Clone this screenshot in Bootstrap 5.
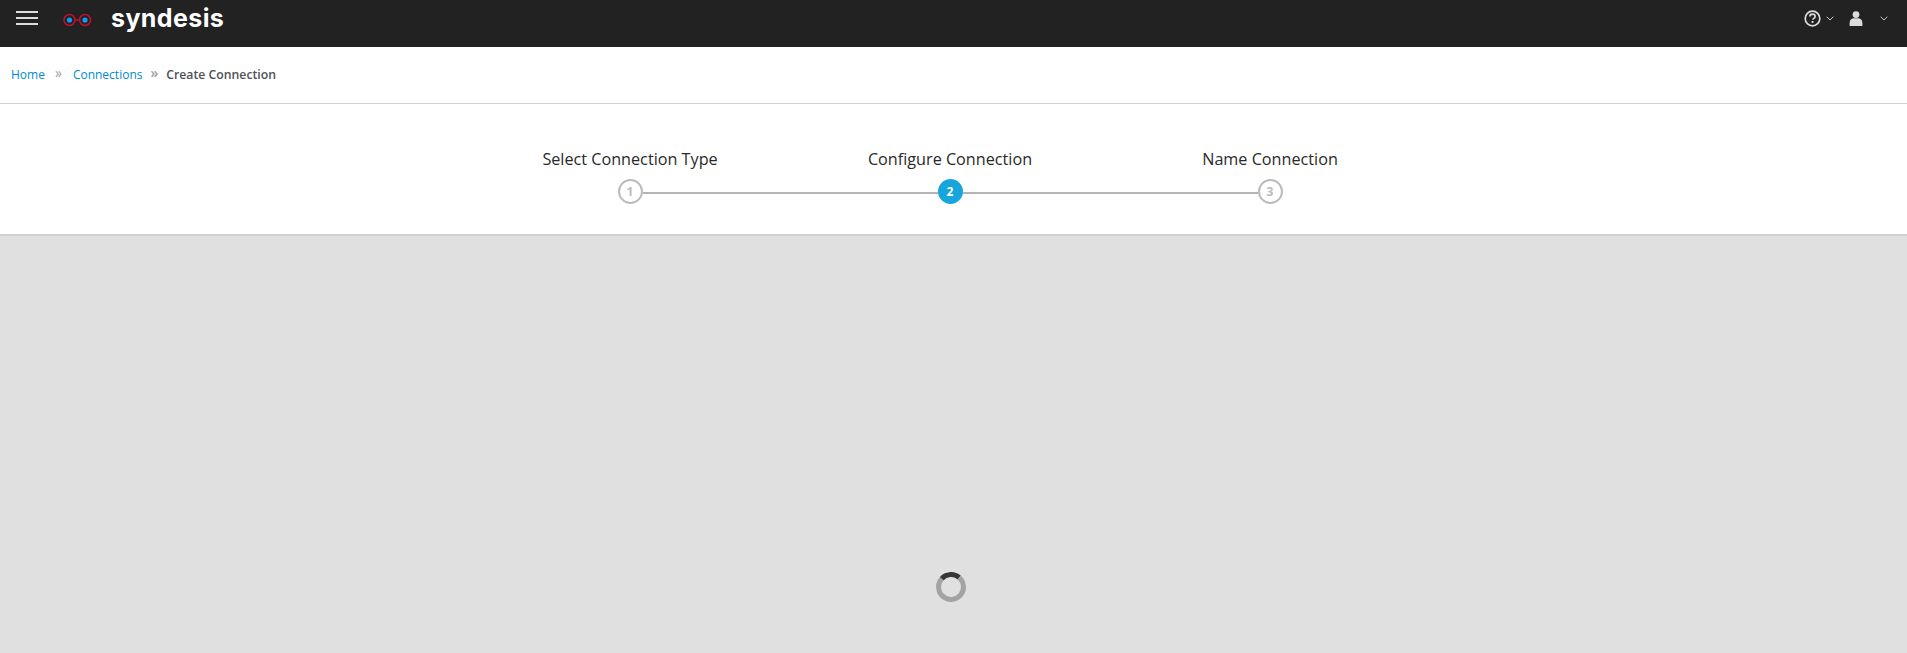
<!DOCTYPE html>
<html lang="en">
<head>
<meta charset="utf-8">
<title>Syndesis - Create Connection</title>
<link rel="stylesheet" href="https://cdn.jsdelivr.net/npm/bootstrap@5.3.0/dist/css/bootstrap.min.css">
<style>
html, body { height: 100%; overflow: hidden; }
body { font-family: "Open Sans", "Noto Sans", sans-serif; background: #e0e0e0; color: #363636; font-size: 12px; }
.sy-top { height: 47px; background: #222222; padding: 0 19px 0 16px; }
.sy-burger { width: 22px; height: 14px; margin-top: -11px; flex-direction: column; justify-content: space-between; }
.sy-burger span { display: block; height: 2px; background: #dcdcdc; }
.sy-glasses { margin-left: 24px; margin-top: -7px; }
.sy-word { font-family: "Inter", sans-serif; font-weight: 700; font-size: 25px; line-height: 1; color: #fff; margin-left: 17px; margin-top: -10px; letter-spacing: .4px; }
.sy-tools { margin-top: -11px; }
.sy-crumbs { height: 57px; background: #fff; border-bottom: 1px solid #d1d1d1; padding: 0 11px; }
.sy-crumbs .breadcrumb { font-size: 12px; margin: 0; }
.sy-crumbs a { color: #0088ce; text-decoration: none; }
.sy-crumbs .breadcrumb-item + .breadcrumb-item { padding-left: 10px; }
.sy-crumbs .breadcrumb-item + .breadcrumb-item::before { content: "\00BB"; color: #9c9c9c; padding-right: 11px; font-size: 14px; line-height: 1; vertical-align: -1px; }
.sy-crumbs .breadcrumb-item.active { color: #4d5258; font-weight: 600; font-size: 12.25px; padding-left: 8px; }
.sy-crumbs .breadcrumb-item.active::before { padding-right: 8px; }
.sy-wizard { height: 132px; background: #fff; border-bottom: 2px solid #d1d1d1; padding: 44px 7px 0 0; }
.sy-labels { width: 960px; }
.sy-label { width: 320px; text-align: center; font-size: 16.2px; line-height: 22px; color: #292929; }
.sy-track { width: 665px; margin-top: 9px; }
.sy-dot { width: 25px; height: 25px; border-radius: 50%; border: 2px solid #bbb; color: #bbb; font-size: 12px; font-weight: 700; flex: none; }
.sy-dot.sy-on { background: #17a6db; border-color: #17a6db; color: #fff; }
.sy-line { height: 2px; background: #b4b4b4; margin-top: 3px; }
.sy-main { padding: 336px 5px 0 0; }
.sy-spin { width: 30px; height: 30px; border-radius: 50%; border: 5px solid #a3a3a3; border-top-color: #363636; transform: rotate(-4deg); }
</style>
</head>
<body>
<header class="sy-top d-flex align-items-center">
  <div class="sy-burger d-flex"><span></span><span></span><span></span></div>
  <svg class="sy-glasses" width="32" height="14" viewBox="0 0 32 14" aria-hidden="true">
    <circle cx="7.5" cy="7" r="5.5" fill="none" stroke="#c3102f" stroke-width="1.5"/>
    <circle cx="23" cy="7" r="5.5" fill="none" stroke="#c3102f" stroke-width="1.5"/>
    <line x1="13" y1="7" x2="17.500" y2="7" stroke="#c3102f" stroke-width="1.5"/>
    <circle cx="7.5" cy="7" r="2.6" fill="#0c9df0"/>
    <circle cx="23" cy="7" r="2.6" fill="#0c9df0"/>
  </svg>
  <span class="sy-word">syndesis</span>
  <div class="sy-tools ms-auto d-flex align-items-center">
    <svg width="17" height="17" viewBox="0 0 17 17" aria-hidden="true">
      <circle cx="8.5" cy="8.5" r="7.3" fill="none" stroke="#dcdcdc" stroke-width="1.7"/>
      <path d="M5.9 6.6c0-1.5 1.1-2.4 2.6-2.4s2.6.9 2.6 2.2c0 1-.6 1.500-1.3 2-.6.4-.9.7-.9 1.4" fill="none" stroke="#dcdcdc" stroke-width="1.7"/>
      <rect x="7.6" y="11" width="1.9" height="1.9" fill="#dcdcdc"/>
    </svg>
    <svg style="margin-left:5px" width="8" height="5" viewBox="0 0 8 5" aria-hidden="true"><path d="M.7.7 4 4l3.3-3.300" fill="none" stroke="#c8c8c8" stroke-width="1"/></svg>
    <svg style="margin-left:15px" width="14" height="15" viewBox="0 0 14 15" aria-hidden="true">
      <circle cx="7" cy="3.6" r="3.4" fill="#dcdcdc"/>
      <path d="M0.6 15V12c0-3 2-4.6 3.6-4.8h5.6C11.400 7.400 13.400 9 13.400 12v3z" fill="#dcdcdc"/>
    </svg>
    <svg style="margin-left:17px" width="8" height="5" viewBox="0 0 8 5" aria-hidden="true"><path d="M.7.7 4 4l3.3-3.300" fill="none" stroke="#c8c8c8" stroke-width="1"/></svg>
  </div>
</header>
<nav class="sy-crumbs d-flex align-items-center" aria-label="breadcrumb">
  <ol class="breadcrumb">
    <li class="breadcrumb-item"><a href="#">Home</a></li>
    <li class="breadcrumb-item"><a href="#">Connections</a></li>
    <li class="breadcrumb-item active" aria-current="page">Create Connection</li>
  </ol>
</nav>
<section class="sy-wizard d-flex flex-column align-items-center">
  <div class="sy-labels d-flex">
    <div class="sy-label">Select Connection Type</div>
    <div class="sy-label">Configure Connection</div>
    <div class="sy-label">Name Connection</div>
  </div>
  <div class="sy-track d-flex align-items-center">
    <div class="sy-dot d-flex align-items-center justify-content-center">1</div>
    <div class="sy-line flex-grow-1"></div>
    <div class="sy-dot sy-on d-flex align-items-center justify-content-center">2</div>
    <div class="sy-line flex-grow-1"></div>
    <div class="sy-dot d-flex align-items-center justify-content-center">3</div>
  </div>
</section>
<main class="sy-main d-flex justify-content-center">
  <div class="sy-spin"></div>
</main>
<script src="https://cdn.jsdelivr.net/npm/bootstrap@5.3.0/dist/js/bootstrap.bundle.min.js"></script>
</body>
</html>
